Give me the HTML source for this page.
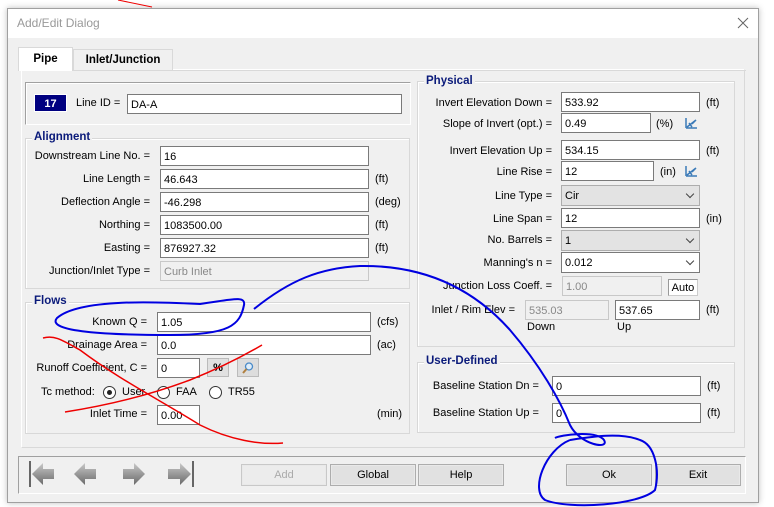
<!DOCTYPE html>
<html><head><meta charset="utf-8"><style>
*{box-sizing:border-box;margin:0;padding:0}
body{width:774px;height:507px;background:#fff;position:relative;overflow:hidden;font-family:"Liberation Sans",Arial,sans-serif;font-size:11px;color:#000}
.a{position:absolute}
.dlg{left:7px;top:8px;width:752px;height:495px;background:#f0f0f0;border:1px solid #a0a0a0;box-shadow:0 0 6px rgba(0,0,0,.25)}
.tb{left:8px;top:9px;width:750px;height:29px;background:#fff}
.grp{border:1px solid #d8d8d8;box-shadow:inset 1px 1px 0 #fff}
.gt{font-weight:bold;color:#0a1a7a;font-size:11.5px;background:#f0f0f0;padding:0 2px}
.in{background:#fff;border:1px solid #7a7a7a;height:20px;padding:3px 3px 1px;line-height:14px;white-space:nowrap}
.dis{background:#f0f0f0;border:1px solid #c8c8c8;color:#888}
.cb{background:#e3e3e3;border:1px solid #adadad}
.cb:after{content:"";position:absolute;right:6px;top:5px;width:5px;height:5px;border-right:1px solid #444;border-bottom:1px solid #444;transform:rotate(45deg)}
.lb{text-align:right;white-space:nowrap}
.u{white-space:nowrap}
.btn{background:#e1e1e1;border:1px solid #adadad;text-align:center;line-height:20px;height:22px;box-shadow:inset 0 0 0 1px #e9e9e9}
.rad{width:13px;height:13px;border:1px solid #333;border-radius:50%;background:#fff}
</style></head><body>
<div class="a dlg"></div>
<div class="a tb"></div>
<div class="a" style="left:17px;top:16px;color:#999;font-size:12px">Add/Edit Dialog</div>
<svg class="a" style="left:737px;top:17px" width="12" height="12"><path d="M1 1L11 11M11 1L1 11" stroke="#666" stroke-width="1"/></svg>

<div class="a" style="left:21px;top:69px;width:724px;height:379px;border:1px solid #d9d9d9;border-top-color:#fff;border-left-color:#fff;background:#f0f0f0"></div>
<div class="a" style="left:18px;top:70px;width:728px;height:1px;background:#d9d9d9"></div>
<div class="a" style="left:18px;top:47px;width:55px;height:24px;background:#fff;border:1px solid #d9d9d9;border-bottom:none;font-weight:bold;text-align:center;line-height:22px;font-size:11.5px">Pipe</div>
<div class="a" style="left:73px;top:49px;width:100px;height:21px;background:#f0f0f0;border:1px solid #d9d9d9;border-bottom:none;font-weight:bold;text-align:center;line-height:21px;font-size:11.5px">Inlet/Junction</div>

<div class="a grp" style="left:25px;top:82px;width:386px;height:43px;border-color:#a0a0a0 #fff #fff #a0a0a0"></div>
<div class="a" style="left:34px;top:94px;width:33px;height:18px;background:#000080;color:#fff;font-weight:bold;text-align:center;line-height:18px;border:1px solid #fff">17</div>
<div class="a" style="left:76px;top:97px">Line ID =</div>
<div class="a in" style="left:127px;top:94px;width:275px">DA-A</div>

<div class="a grp" style="left:25px;top:138px;width:385px;height:151px"></div>
<div class="a gt" style="left:32px;top:131px">Alignment</div>
<div class="a lb" style="left:20px;width:130px;top:150px">Downstream Line No. =</div><div class="a in" style="left:160px;top:146px;width:209px">16</div>
<div class="a lb" style="left:20px;width:130px;top:173px">Line Length =</div><div class="a in" style="left:160px;top:169px;width:209px">46.643</div><div class="a u" style="left:375px;top:173px">(ft)</div>
<div class="a lb" style="left:20px;width:130px;top:196px">Deflection Angle =</div><div class="a in" style="left:160px;top:192px;width:209px">-46.298</div><div class="a u" style="left:375px;top:196px">(deg)</div>
<div class="a lb" style="left:20px;width:130px;top:219px">Northing =</div><div class="a in" style="left:160px;top:215px;width:209px">1083500.00</div><div class="a u" style="left:375px;top:219px">(ft)</div>
<div class="a lb" style="left:20px;width:130px;top:242px">Easting =</div><div class="a in" style="left:160px;top:238px;width:209px">876927.32</div><div class="a u" style="left:375px;top:242px">(ft)</div>
<div class="a lb" style="left:20px;width:130px;top:265px">Junction/Inlet Type =</div><div class="a in dis" style="left:160px;top:261px;width:209px">Curb Inlet</div>

<div class="a grp" style="left:25px;top:302px;width:385px;height:132px"></div>
<div class="a gt" style="left:32px;top:295px">Flows</div>
<div class="a lb" style="left:20px;width:127px;top:316px">Known Q =</div><div class="a in" style="left:157px;top:312px;width:214px">1.05</div><div class="a u" style="left:377px;top:316px">(cfs)</div>
<div class="a lb" style="left:20px;width:127px;top:339px">Drainage Area =</div><div class="a in" style="left:157px;top:335px;width:214px">0.0</div><div class="a u" style="left:377px;top:339px">(ac)</div>
<div class="a lb" style="left:20px;width:127px;top:362px">Runoff Coefficient, C =</div><div class="a in" style="left:157px;top:358px;width:43px">0</div>
<div class="a" style="left:207px;top:358px;width:22px;height:19px;background:#e1e1e1;border:1px solid #bbb;font-weight:bold;text-align:center;line-height:18px">%</div>
<div class="a" style="left:237px;top:358px;width:22px;height:19px;background:#ddd;border:1px solid #bbb"></div>
<svg class="a" style="left:241px;top:361px" width="14" height="14"><circle cx="8" cy="5.5" r="3.5" fill="#dfeefa" stroke="#4a8ac8" stroke-width="1.3"/><path d="M5.5 8L2 12" stroke="#b08040" stroke-width="2"/></svg>
<div class="a" style="left:41px;top:386px">Tc method:</div>
<div class="a rad" style="left:103px;top:386px"></div><div class="a" style="left:107px;top:390px;width:5px;height:5px;border-radius:50%;background:#222"></div><div class="a" style="left:122px;top:386px">User</div>
<div class="a rad" style="left:157px;top:386px"></div><div class="a" style="left:176px;top:386px">FAA</div>
<div class="a rad" style="left:209px;top:386px"></div><div class="a" style="left:228px;top:386px">TR55</div>
<div class="a lb" style="left:20px;width:127px;top:408px">Inlet Time =</div><div class="a in" style="left:157px;top:405px;width:43px">0.00</div><div class="a u" style="left:377px;top:408px">(min)</div>

<div class="a grp" style="left:417px;top:81px;width:318px;height:266px"></div>
<div class="a gt" style="left:424px;top:75px">Physical</div>
<div class="a lb" style="left:400px;width:152px;top:97px">Invert Elevation Down =</div><div class="a in" style="left:561px;top:92px;width:139px">533.92</div><div class="a u" style="left:706px;top:97px">(ft)</div>
<div class="a lb" style="left:400px;width:152px;top:118px">Slope of Invert (opt.) =</div><div class="a in" style="left:561px;top:113px;width:90px">0.49</div><div class="a u" style="left:656px;top:118px">(%)</div>
<svg class="a" style="left:685px;top:117px" width="13" height="12"><path d="M1 11H12M1 11V1M2 10L11 3M7 7L11 3M4 6l3 4" stroke="#3a7ab8" stroke-width="1.5" fill="none"/></svg>
<div class="a lb" style="left:400px;width:152px;top:145px">Invert Elevation Up =</div><div class="a in" style="left:561px;top:140px;width:139px">534.15</div><div class="a u" style="left:706px;top:145px">(ft)</div>
<div class="a lb" style="left:400px;width:152px;top:166px">Line Rise =</div><div class="a in" style="left:561px;top:161px;width:93px">12</div><div class="a u" style="left:660px;top:166px">(in)</div>
<svg class="a" style="left:685px;top:165px" width="13" height="12"><path d="M1 11H12M1 11V1M2 10L11 3M7 7L11 3M4 6l3 4" stroke="#3a7ab8" stroke-width="1.5" fill="none"/></svg>
<div class="a lb" style="left:400px;width:152px;top:190px">Line Type =</div><div class="a in cb" style="left:561px;top:185px;width:139px;height:21px">Cir</div>
<div class="a lb" style="left:400px;width:152px;top:213px">Line Span =</div><div class="a in" style="left:561px;top:208px;width:139px">12</div><div class="a u" style="left:706px;top:213px">(in)</div>
<div class="a lb" style="left:400px;width:152px;top:234px">No. Barrels =</div><div class="a in cb" style="left:561px;top:230px;width:139px;height:21px">1</div>
<div class="a lb" style="left:400px;width:152px;top:257px">Manning's n =</div><div class="a in cb" style="left:561px;top:252px;width:139px;height:21px;background:#fff;border-color:#7a7a7a">0.012</div>
<div class="a lb" style="left:400px;width:152px;top:280px">Junction Loss Coeff. =</div><div class="a in dis" style="left:562px;top:276px;width:100px">1.00</div>
<div class="a" style="left:668px;top:279px;width:30px;height:17px;background:#fff;border:1px solid #ccc;border-top-color:#999;border-left-color:#999;text-align:center;line-height:16px">Auto</div>
<div class="a lb" style="left:420px;width:95px;top:304px">Inlet / Rim Elev =</div><div class="a in dis" style="left:525px;top:300px;width:84px">535.03</div><div class="a in" style="left:615px;top:300px;width:85px">537.65</div><div class="a u" style="left:706px;top:304px">(ft)</div>
<div class="a" style="left:527px;top:321px">Down</div><div class="a" style="left:617px;top:321px">Up</div>

<div class="a grp" style="left:417px;top:362px;width:318px;height:71px"></div>
<div class="a gt" style="left:424px;top:355px">User-Defined</div>
<div class="a lb" style="left:400px;width:139px;top:380px">Baseline Station Dn =</div><div class="a in" style="left:552px;top:376px;width:149px">0</div><div class="a u" style="left:707px;top:380px">(ft)</div>
<div class="a lb" style="left:400px;width:139px;top:407px">Baseline Station Up =</div><div class="a in" style="left:552px;top:403px;width:149px">0</div><div class="a u" style="left:707px;top:407px">(ft)</div>

<div class="a" style="left:18px;top:456px;width:728px;height:38px;border:1px solid #a0a0a0;border-right-color:#fff;border-bottom-color:#fff"></div>
<svg class="a" style="left:26px;top:461px" width="170" height="30">
<defs><linearGradient id="g" x1="0" y1="0" x2="0" y2="1"><stop offset="0" stop-color="#c8c8c8"/><stop offset="1" stop-color="#6a6a6a"/></linearGradient></defs>
<rect x="3" y="0" width="2" height="26" fill="#666"/>
<path d="M6 13L17 2V8H28V18H17V24Z" fill="url(#g)"/>
<path d="M48 13L59 2V8H70V18H59V24Z" fill="url(#g)"/>
<path d="M119 13L108 2V8H97V18H108V24Z" fill="url(#g)"/>
<path d="M165 13L154 2V8H142V18H154V24Z" fill="url(#g)"/>
<rect x="166" y="0" width="2" height="26" fill="#666"/>
</svg>
<div class="a btn" style="left:241px;top:464px;width:86px;color:#aaa;background:#ececec;border-color:#c8c8c8">Add</div>
<div class="a btn" style="left:330px;top:464px;width:86px">Global</div>
<div class="a btn" style="left:418px;top:464px;width:86px">Help</div>
<div class="a btn" style="left:566px;top:464px;width:86px">Ok</div>
<div class="a btn" style="left:655px;top:464px;width:86px">Exit</div>

<svg class="a" style="left:0;top:0" width="774" height="507">
<path d="M118 0L152 7" stroke="#e00" stroke-width="1" fill="none"/>
<path d="M200 304C160 302 80 298 57 318C45 332 110 335 170 335C230 335 240 325 244 305C246 295 230 300 200 304Z" stroke="#0000e0" stroke-width="2" fill="none"/>
<path d="M254 309C290 280 320 268 360 266C420 265 470 285 510 330C540 365 560 400 570 425C580 445 610 450 604 440C596 430 560 435 555 438" stroke="#0000e0" stroke-width="2" fill="none"/>
<path d="M570 440C545 450 530 490 545 500C570 510 640 505 655 490C660 470 655 445 640 440C620 432 590 437 570 440" stroke="#0000e0" stroke-width="2" fill="none"/>
<path d="M43 338C55 335 62 340 80 350C120 380 160 400 200 425C230 440 260 445 283 443" stroke="#e00" stroke-width="1.5" fill="none"/>
<path d="M65 412C110 405 150 395 190 380C220 368 245 355 262 345" stroke="#e00" stroke-width="1.5" fill="none"/>
</svg>
</body></html>
